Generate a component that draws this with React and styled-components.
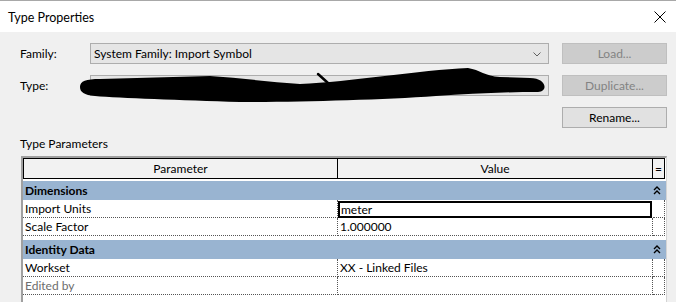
import React from 'react';
import styled, { createGlobalStyle } from 'styled-components';

const Global = createGlobalStyle`
  html, body {
    margin: 0;
    padding: 0;
    background: #f0f0f0;
    font-family: Lato, "Noto Sans", sans-serif;
    font-size: 12px;
    color: #000;
    overflow: hidden;
  }
`;

const Dialog = styled.div`
  position: relative;
  width: 676px;
  height: 302px;
  overflow: hidden;
  background: #f0f0f0;
`;

const TitleBar = styled.div`
  height: 31px;
  border-top: 1px solid #a8a8a8;
  background: #fff;
  display: flex;
  align-items: center;
  justify-content: space-between;
  padding: 0 10px 0 8px;
`;

const Title = styled.span`
  font-size: 12.5px;
  margin-top: 1px;
`;

const Close = styled.svg`
  width: 12px;
  height: 12px;
`;

const Form = styled.div`
  display: grid;
  grid-template-columns: 57px 459px 105px;
  grid-auto-rows: 21px;
  column-gap: 13px;
  row-gap: 11px;
  padding: 11px 0 0 20px;
  align-items: center;
  & > :nth-child(9) {
    margin-top: -1px;
  }
`;

const Label = styled.span`
  font-size: 12px;
`;

const Combo = styled.div`
  height: 19px;
  border: 1px solid #adadad;
  background: #e5e5e5;
  display: flex;
  align-items: center;
  justify-content: space-between;
  padding: 0 6px 0 3px;
`;

const Button = styled.div`
  height: 19px;
  border: 1px solid ${p => (p.disabled ? '#bfbfbf' : '#adadad')};
  background: ${p => (p.disabled ? '#cccccc' : '#e1e1e1')};
  color: ${p => (p.disabled ? '#838383' : '#000')};
  display: flex;
  align-items: center;
  justify-content: center;
`;

const Section = styled.div`
  padding: 8px 0 0 20px;
`;

const TableFrame = styled.div`
  margin-top: 5px;
  margin-left: 1px;
  width: 643px;
  height: 200px;
  border-left: 2px solid #a0a0a0;
  border-top: 2px solid #a0a0a0;
  border-right: 1px solid #d4d4d4;
  background: #fff;
`;

const Header = styled.div`
  display: grid;
  grid-template-columns: 314px 315px 11px;
  width: 642px;
  height: 21px;
  border: 1px solid #000;
  box-sizing: border-box;
  background: #f2f2f2;
`;

const HeadCell = styled.div`
  display: flex;
  align-items: center;
  justify-content: center;
  border-right: ${p => (p.last ? 'none' : '1px solid #000')};
`;

const Group = styled.div`
  margin-top: ${p => p.gap}px;
  height: 19px;
  background: #99b4d1;
  display: flex;
  align-items: center;
  justify-content: space-between;
  padding: 0 5px 0 2px;
  box-sizing: border-box;
  font-weight: 700;
  line-height: 16px;
`;

const Row = styled.div`
  display: grid;
  grid-template-columns: 315px 315px 12px;
  grid-template-rows: 18px;
  height: 18px;
`;

const Cell = styled.div`
  display: flex;
  align-items: center;
  padding-left: 2px;
  box-sizing: border-box;
  line-height: 15px;
  overflow: hidden;
  border-bottom: 1px dotted #555;
  border-right: 1px dotted #555;
  color: ${p => (p.muted ? '#6d6d6d' : '#000')};
  white-space: nowrap;
`;

const EditCell = styled(Cell)`
  border: 2px solid #000;
  margin: 1px 1px 0 0;
  height: 17px;
  padding-left: 1px;
`;

const Blot = styled.svg`
  position: absolute;
  left: 0;
  top: 0;
  pointer-events: none;
`;

const Chevron = () => (
  <svg width="10" height="6" viewBox="0 0 10 6">
    <path d="M1.5 1.5 L5 5 L8.5 1.5" fill="none" stroke="#606060" strokeWidth="1" />
  </svg>
);

const Collapse = () => (
  <svg width="8" height="9" viewBox="0 0 8 9">
    <path d="M1 4 L4 1 L7 4 M1 8 L4 5 L7 8" fill="none" stroke="#000" strokeWidth="1.4" />
  </svg>
);

const groups = [
  {
    name: 'Dimensions',
    gap: 2,
    rows: [
      { param: 'Import Units', value: 'meter', edit: true },
      { param: 'Scale Factor', value: '1.000000' },
    ],
  },
  {
    name: 'Identity Data',
    gap: 4,
    rows: [
      { param: 'Workset', value: 'XX - Linked Files' },
      { param: 'Edited by', value: '', muted: true },
    ],
  },
];

export default function App() {
  return (
    <Dialog>
      <Global />
      <TitleBar>
        <Title>Type Properties</Title>
        <Close viewBox="0 0 12 12">
          <path d="M0.5 0.5 L11.5 11.5 M11.5 0.5 L0.5 11.5" stroke="#000" strokeWidth="1" />
        </Close>
      </TitleBar>
      <Form>
        <Label>Family:</Label>
        <Combo>
          <span>System Family: Import Symbol</span>
          <Chevron />
        </Combo>
        <Button disabled>Load...</Button>
        <Label>Type:</Label>
        <Combo>
          <span />
        </Combo>
        <Button disabled>Duplicate...</Button>
        <span />
        <span />
        <Button>Rename...</Button>
      </Form>
      <Section>
        <Label>Type Parameters</Label>
        <TableFrame>
          <Header>
            <HeadCell>Parameter</HeadCell>
            <HeadCell>Value</HeadCell>
            <HeadCell last>=</HeadCell>
          </Header>
          {groups.map(g => (
            <React.Fragment key={g.name}>
              <Group gap={g.gap}>
                <span>{g.name}</span>
                <Collapse />
              </Group>
              {g.rows.map(r => (
                <Row key={r.param}>
                  <Cell muted={r.muted}>{r.param}</Cell>
                  {r.edit ? <EditCell>{r.value}</EditCell> : <Cell>{r.value}</Cell>}
                  <Cell />
                </Row>
              ))}
            </React.Fragment>
          ))}
        </TableFrame>
      </Section>
      <Blot width="676" height="110" viewBox="0 0 676 110">
        <path
          d="M80 87 C80 81 86 79 100 79 L210 76 C240 78 270 82 300 84 C350 82 420 70 468 68 C480 70 485 76 500 77 L530 78 C546 78 549 91 538 92 C500 92 470 94 436 96 C380 100 300 102 240 102 C180 100 120 98 95 96 C84 95 80 92 80 87 Z"
          fill="#000"
        />
        <path d="M318 74 L328 83" stroke="#000" strokeWidth="2.5" strokeLinecap="round" />
      </Blot>
    </Dialog>
  );
}
